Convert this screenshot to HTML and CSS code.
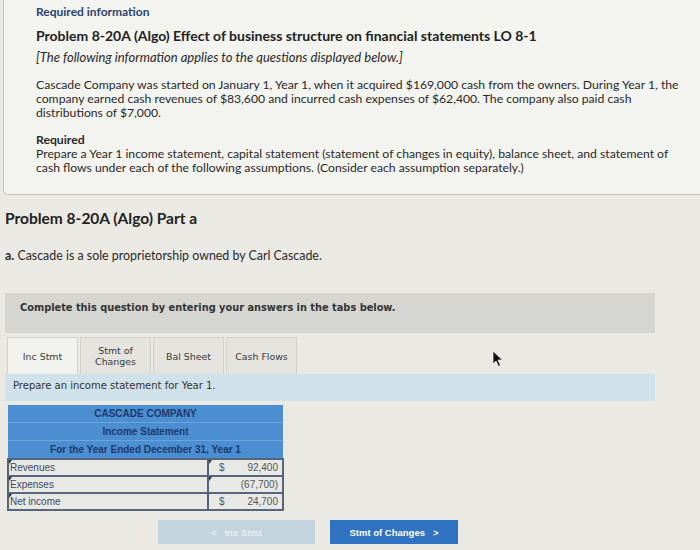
FILE: index.html
```html
<!DOCTYPE html>
<html lang="en">
<head>
<meta charset="UTF-8">
<meta name="viewport" content="width=device-width, initial-scale=1.0">
<title>Problem 8-20A (Algo)</title>
<link rel="stylesheet" href="styles.css">
</head>
<body>

<div class="info">
    <div class="req-title">Required information</div>
    <h2>Problem 8-20A (Algo) Effect of business structure on financial statements LO 8-1</h2>
    <p class="note">[The following information applies to the questions displayed below.]</p>
    <p class="text">Cascade Company was started on January 1, Year 1, when it acquired $169,000 cash from the owners. During Year 1, the company earned cash revenues of $83,600 and incurred cash expenses of $62,400. The company also paid cash distributions of $7,000.</p>
    <p class="text"><b>Required</b><br>Prepare a Year 1 income statement, capital statement (statement of changes in equity), balance sheet, and statement of cash flows under each of the following assumptions. (Consider each assumption separately.)</p>
</div>

<h3 class="part">Problem 8-20A (Algo) Part a</h3>
<p class="part-text"><b>a.</b> Cascade is a sole proprietorship owned by Carl Cascade.</p>

<div class="question">
    <div class="banner">Complete this question by entering your answers in the tabs below.</div>

    <div class="tabs">
        <div class="tab active">Inc Stmt</div>
        <div class="tab">Stmt of<br>Changes</div>
        <div class="tab">Bal Sheet</div>
        <div class="tab">Cash Flows</div>
    </div>

    <div class="prompt">Prepare an income statement for Year 1.</div>

    <table class="stmt">
        <tr class="head"><td colspan="2">CASCADE COMPANY</td></tr>
        <tr class="head"><td colspan="2">Income Statement</td></tr>
        <tr class="head"><td colspan="2">For the Year Ended December 31, Year 1</td></tr>
        <tr>
            <td class="label mark">Revenues</td>
            <td class="amt mark"><span class="sign">$</span>92,400</td>
        </tr>
        <tr>
            <td class="label mark">Expenses</td>
            <td class="amt mark">(67,700)</td>
        </tr>
        <tr>
            <td class="label mark">Net income</td>
            <td class="amt"><span class="sign">$</span>24,700</td>
        </tr>
    </table>

    <div class="nav">
        <div class="btn prev">&lt;&nbsp;&nbsp;&nbsp;Inc Stmt</div>
        <div class="btn next">Stmt of Changes&nbsp;&nbsp;&nbsp;&gt;</div>
    </div>
</div>

<svg class="cursor" width="12" height="18" viewBox="0 0 12 18">
    <path d="M1 1 L1 14 L4 11 L6.5 16.5 L8.5 15.5 L6 10 L10.5 10 Z" fill="#111" stroke="#eee" stroke-width="0.8"/>
</svg>

</body>
</html>
```

FILE: styles.css
```css
body {
    margin: 0;
    background-color: #ebe9e4;
    font-family: Lato, "Open Sans", sans-serif;
    color: #2a2a2a;
    position: relative;
}

.info {
    margin-left: 3px;
    height: 195px;
    box-sizing: border-box;
    padding: 4px 0 0 32px;
    background-color: #f3f3f0;
    border: 1px solid #c4c4c0;
    border-top: none;
    border-right: none;
    border-radius: 0 0 0 5px;
}

.req-title {
    font-size: 12px;
    font-weight: bold;
    color: #2b4470;
    line-height: 16px;
}

.info h2 {
    margin: 8px 0 0;
    font-size: 14px;
    line-height: 16px;
    color: #222;
}

.note {
    margin: 5px 0 0;
    font-size: 13px;
    font-style: italic;
    line-height: 16px;
}

.text {
    margin: 13px 0 0;
    font-size: 12.2px;
    line-height: 14px;
    padding-right: 12px;
}

.part {
    margin: 14px 0 0 5px;
    font-size: 15.5px;
    line-height: 18px;
    color: #222;
}

.part-text {
    margin: 22px 0 0 5px;
    font-size: 12.4px;
    line-height: 14px;
}

.question {
    margin: 30px 0 0 5px;
    width: 650px;
    font-family: "DejaVu Sans", Verdana, sans-serif;
}

.banner {
    height: 40px;
    box-sizing: border-box;
    padding: 9px 15px;
    background-color: #d5d5d1;
    font-size: 9.8px;
    font-weight: bold;
    color: #333;
}

.tabs {
    display: flex;
    gap: 2px;
    margin: 4px 0 0 2px;
}

.tab {
    width: 71px;
    height: 37px;
    box-sizing: border-box;
    display: flex;
    align-items: center;
    justify-content: center;
    text-align: center;
    font-size: 9.4px;
    line-height: 11px;
    color: #3a3a3a;
    background-color: #e4e3de;
    border: 1px solid #d0d0cc;
    border-bottom: none;
}

.tab.active {
    background-color: #f1f1ee;
}

.prompt {
    height: 27px;
    box-sizing: border-box;
    padding: 6px 8px;
    background-color: #cfe1e9;
    font-size: 10px;
    color: #333;
}

.stmt {
    margin: 4px 0 0 2px;
    width: 277px;
    border-collapse: collapse;
    font-family: "Liberation Sans", Arial, sans-serif;
    font-size: 10px;
}

.stmt .head td {
    height: 17px;
    padding: 0;
    text-align: center;
    font-weight: bold;
    color: #1c3a6c;
    background-color: #4b8fd2;
    border: none;
    border-bottom: 1px solid #6ca4dc;
}

.stmt td {
    height: 15px;
    padding: 0 4px 0 1px;
    background-color: #e8e8e5;
    border: 2px solid #56657c;
    color: #555;
    position: relative;
}

.stmt .label {
    width: 193px;
    color: #3b4866;
}

.stmt .amt {
    text-align: right;
}

.stmt .sign {
    float: left;
    margin-left: 9px;
}

.stmt .mark::before {
    content: "";
    position: absolute;
    left: 0;
    top: 0;
    border-top: 4px solid #2a3346;
    border-right: 3px solid transparent;
}

.nav {
    display: flex;
    align-items: center;
    gap: 15px;
    margin: 9px 0 0 153px;
    font-family: "Liberation Sans", Arial, sans-serif;
    font-size: 9.5px;
    font-weight: bold;
}

.btn {
    height: 24px;
    display: flex;
    align-items: center;
    justify-content: center;
    color: #fff;
}

.prev {
    width: 157px;
    background-color: #c4d4de;
    color: #e8eef2;
}

.next {
    width: 128px;
    background-color: #2f72c2;
}

.cursor {
    position: absolute;
    left: 492px;
    top: 350px;
}
```
